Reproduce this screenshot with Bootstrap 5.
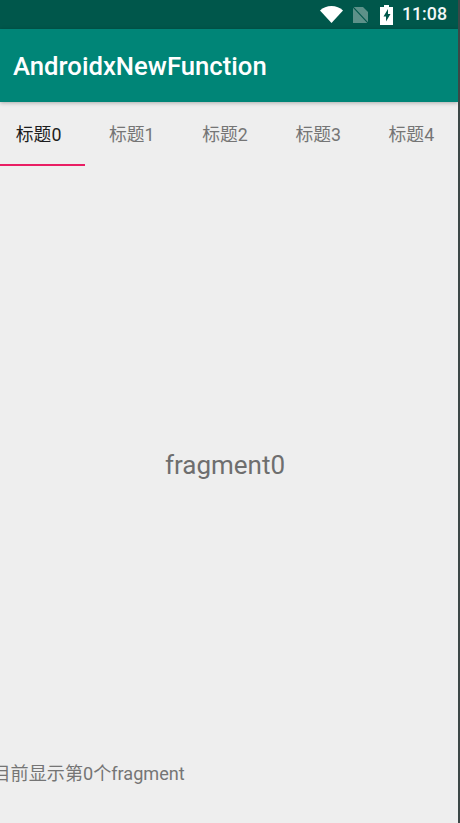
<!DOCTYPE html>
<html lang="zh"><head><meta charset="utf-8">
<link href="https://cdn.jsdelivr.net/npm/bootstrap@5.3.0/dist/css/bootstrap.min.css" rel="stylesheet">
<style>
html,body{height:100%;overflow:hidden;background:#eeeeee}
body{font-family:Roboto,"Noto Sans CJK SC",sans-serif}
.screen{width:460px;height:823px;overflow:hidden;background:#eeeeee;border-right:2px solid #3c4746}
.statusbar{height:29px;background:#00574b;color:#f2f8f7;font-size:17.8px;font-weight:500;padding-right:11px;gap:9px}
.sim-glyph{margin-right:2px}
.appbar{height:73px;background:#008577;color:#fff;font-size:25.7px;font-weight:500;padding:2px 0 0 13px;box-shadow:0 1px 4px rgba(0,0,0,.28);position:relative}
.tabstrip{height:64px;margin-left:-8px}
.tabitem{width:93.2px;flex:none;color:#757575;font-size:17.8px;padding-top:5px;border-bottom:2px solid transparent}
.tabitem.on{color:#1d1d1d;border-bottom-color:#e91e63}
.frag{font-size:26px;color:#6e6e6e;margin-bottom:-3px;padding-right:8px}
.main{height:595px}
.hint{font-size:18.1px;color:#757575;margin-left:-7.500px;line-height:24px;padding:1px 0 36px;white-space:nowrap}
</style></head><body>
<div class="screen d-flex flex-column">
  <div class="statusbar d-flex align-items-center justify-content-end">
    <svg width="23" height="17" viewBox="0 0 23 17"><path d="M0 4.500C3 1.500 7 0 11.500 0S20 1.500 23 4.500L11.500 17z" fill="#fff"/></svg>
    <svg class="sim-glyph" width="17" height="18" viewBox="0 0 17 18"><path d="M1 1h10l5 5v11H1z" fill="#5d9189"/><path d="M0 0l17 18" stroke="#00574b" stroke-width="1.200"/></svg>
    <svg width="13" height="20" viewBox="0 0 13 20"><path d="M4 0h5v2h4v18H0V2h4z" fill="#fff"/><path d="M8 4L3.500 11.500H6v5l4.500-7.500H8z" fill="#00574b"/></svg>
    <span>11:08</span>
  </div>
  <div class="appbar d-flex align-items-center">AndroidxNewFunction</div>
  <div class="tabstrip d-flex">
    <div class="tabitem on d-flex align-items-center justify-content-center">标题0</div>
    <div class="tabitem d-flex align-items-center justify-content-center">标题1</div>
    <div class="tabitem d-flex align-items-center justify-content-center">标题2</div>
    <div class="tabitem d-flex align-items-center justify-content-center">标题3</div>
    <div class="tabitem d-flex align-items-center justify-content-center">标题4</div>
  </div>
  <div class="main d-flex align-items-center justify-content-center"><div class="frag">fragment0</div></div>
  <div class="hint">目前显示第0个fragment</div>
</div>
<script src="https://cdn.jsdelivr.net/npm/bootstrap@5.3.0/dist/js/bootstrap.bundle.min.js"></script>
</body></html>
